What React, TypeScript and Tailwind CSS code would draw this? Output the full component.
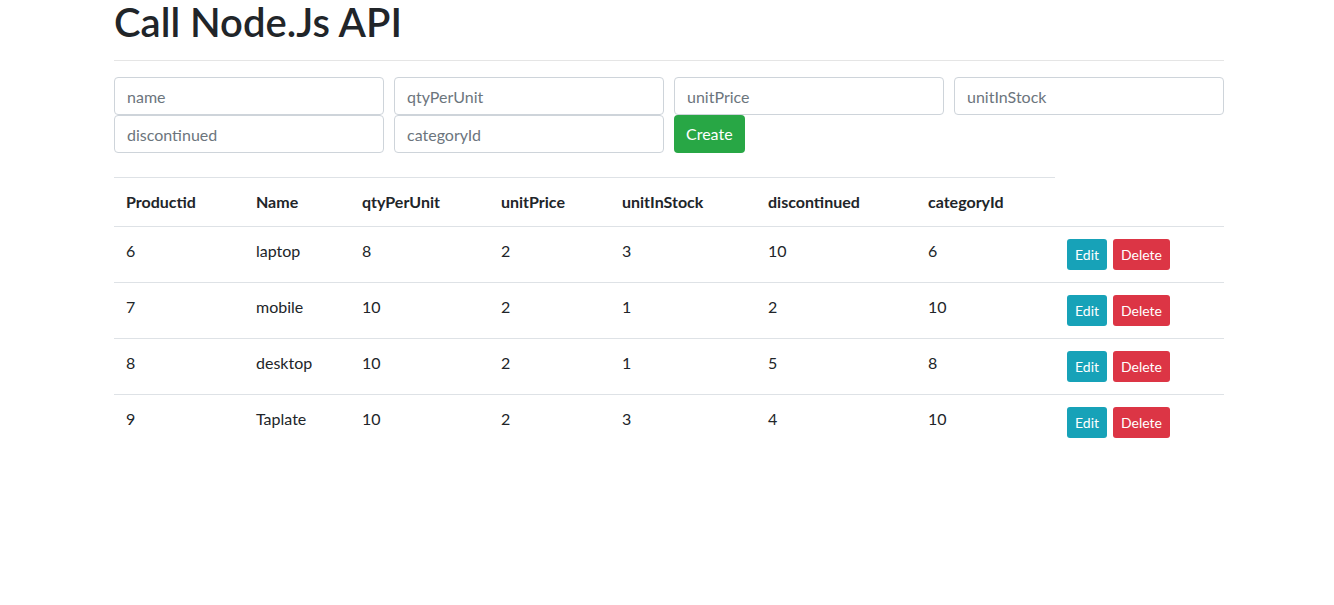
import React from 'react';

type Product = {
  id: number;
  name: string;
  qtyPerUnit: number;
  unitPrice: number;
  unitInStock: number;
  discontinued: number;
  categoryId: number;
};

const products: Product[] = [
  { id: 6, name: 'laptop', qtyPerUnit: 8, unitPrice: 2, unitInStock: 3, discontinued: 10, categoryId: 6 },
  { id: 7, name: 'mobile', qtyPerUnit: 10, unitPrice: 2, unitInStock: 1, discontinued: 2, categoryId: 10 },
  { id: 8, name: 'desktop', qtyPerUnit: 10, unitPrice: 2, unitInStock: 1, discontinued: 5, categoryId: 8 },
  { id: 9, name: 'Taplate', qtyPerUnit: 10, unitPrice: 2, unitInStock: 3, discontinued: 4, categoryId: 10 },
];

const fields = ['name', 'qtyPerUnit', 'unitPrice', 'unitInStock', 'discontinued', 'categoryId'];

const headers = [
  { label: 'Productid', w: 'w-[130px]' },
  { label: 'Name', w: 'w-[106px]' },
  { label: 'qtyPerUnit', w: 'w-[139px]' },
  { label: 'unitPrice', w: 'w-[121px]' },
  { label: 'unitInStock', w: 'w-[146px]' },
  { label: 'discontinued', w: 'w-[160px]' },
  { label: 'categoryId', w: 'w-[139px]' },
];

export default function App() {
  return (
    <div className="min-h-screen bg-white text-[#212529] font-['Lato','Liberation_Sans',sans-serif] text-base">
      <div className="w-[1110px] ml-[114px]">
        {/* Title */}
        <h1 className="text-[40px] font-semibold leading-[48px] -mt-[2px]">Call Node.Js API</h1>
        <hr className="mt-[14px] border-t border-[#e5e5e5]" />

        {/* Form */}
        <div className="mt-[16px] flex flex-wrap gap-x-[10px]">
          {fields.map((f) => (
            <input
              key={f}
              placeholder={f}
              className="w-[270px] h-[38px] px-3 border border-[#ced4da] rounded-[4px] text-base text-[#495057] placeholder:text-[#6c757d] outline-none"
            />
          ))}
          <button className="h-[38px] px-3 bg-[#28a745] text-white rounded-[4px] text-base">Create</button>
        </div>

        {/* Table */}
        <table className="mt-[24px] w-full border-collapse text-left">
          <thead>
            <tr>
              {headers.map((h) => (
                <th key={h.label} className={`${h.w} p-3 font-bold border-t border-[#dee2e6] leading-6`}>
                  {h.label}
                </th>
              ))}
            </tr>
          </thead>
          <tbody>
            {products.map((p) => (
              <tr key={p.id}>
                <td className="p-3 align-top border-t border-[#dee2e6] leading-6">{p.id}</td>
                <td className="p-3 align-top border-t border-[#dee2e6] leading-6">{p.name}</td>
                <td className="p-3 align-top border-t border-[#dee2e6] leading-6">{p.qtyPerUnit}</td>
                <td className="p-3 align-top border-t border-[#dee2e6] leading-6">{p.unitPrice}</td>
                <td className="p-3 align-top border-t border-[#dee2e6] leading-6">{p.unitInStock}</td>
                <td className="p-3 align-top border-t border-[#dee2e6] leading-6">{p.discontinued}</td>
                <td className="p-3 align-top border-t border-[#dee2e6] leading-6">{p.categoryId}</td>
                <td className="p-3 align-top border-t border-[#dee2e6]">
                  <div className="flex gap-[6px]">
                    <button className="h-[31px] px-2 bg-[#17a2b8] text-white text-sm rounded-[3px]">Edit</button>
                    <button className="h-[31px] px-2 bg-[#dc3545] text-white text-sm rounded-[3px]">Delete</button>
                  </div>
                </td>
              </tr>
            ))}
          </tbody>
        </table>
      </div>
    </div>
  );
}
